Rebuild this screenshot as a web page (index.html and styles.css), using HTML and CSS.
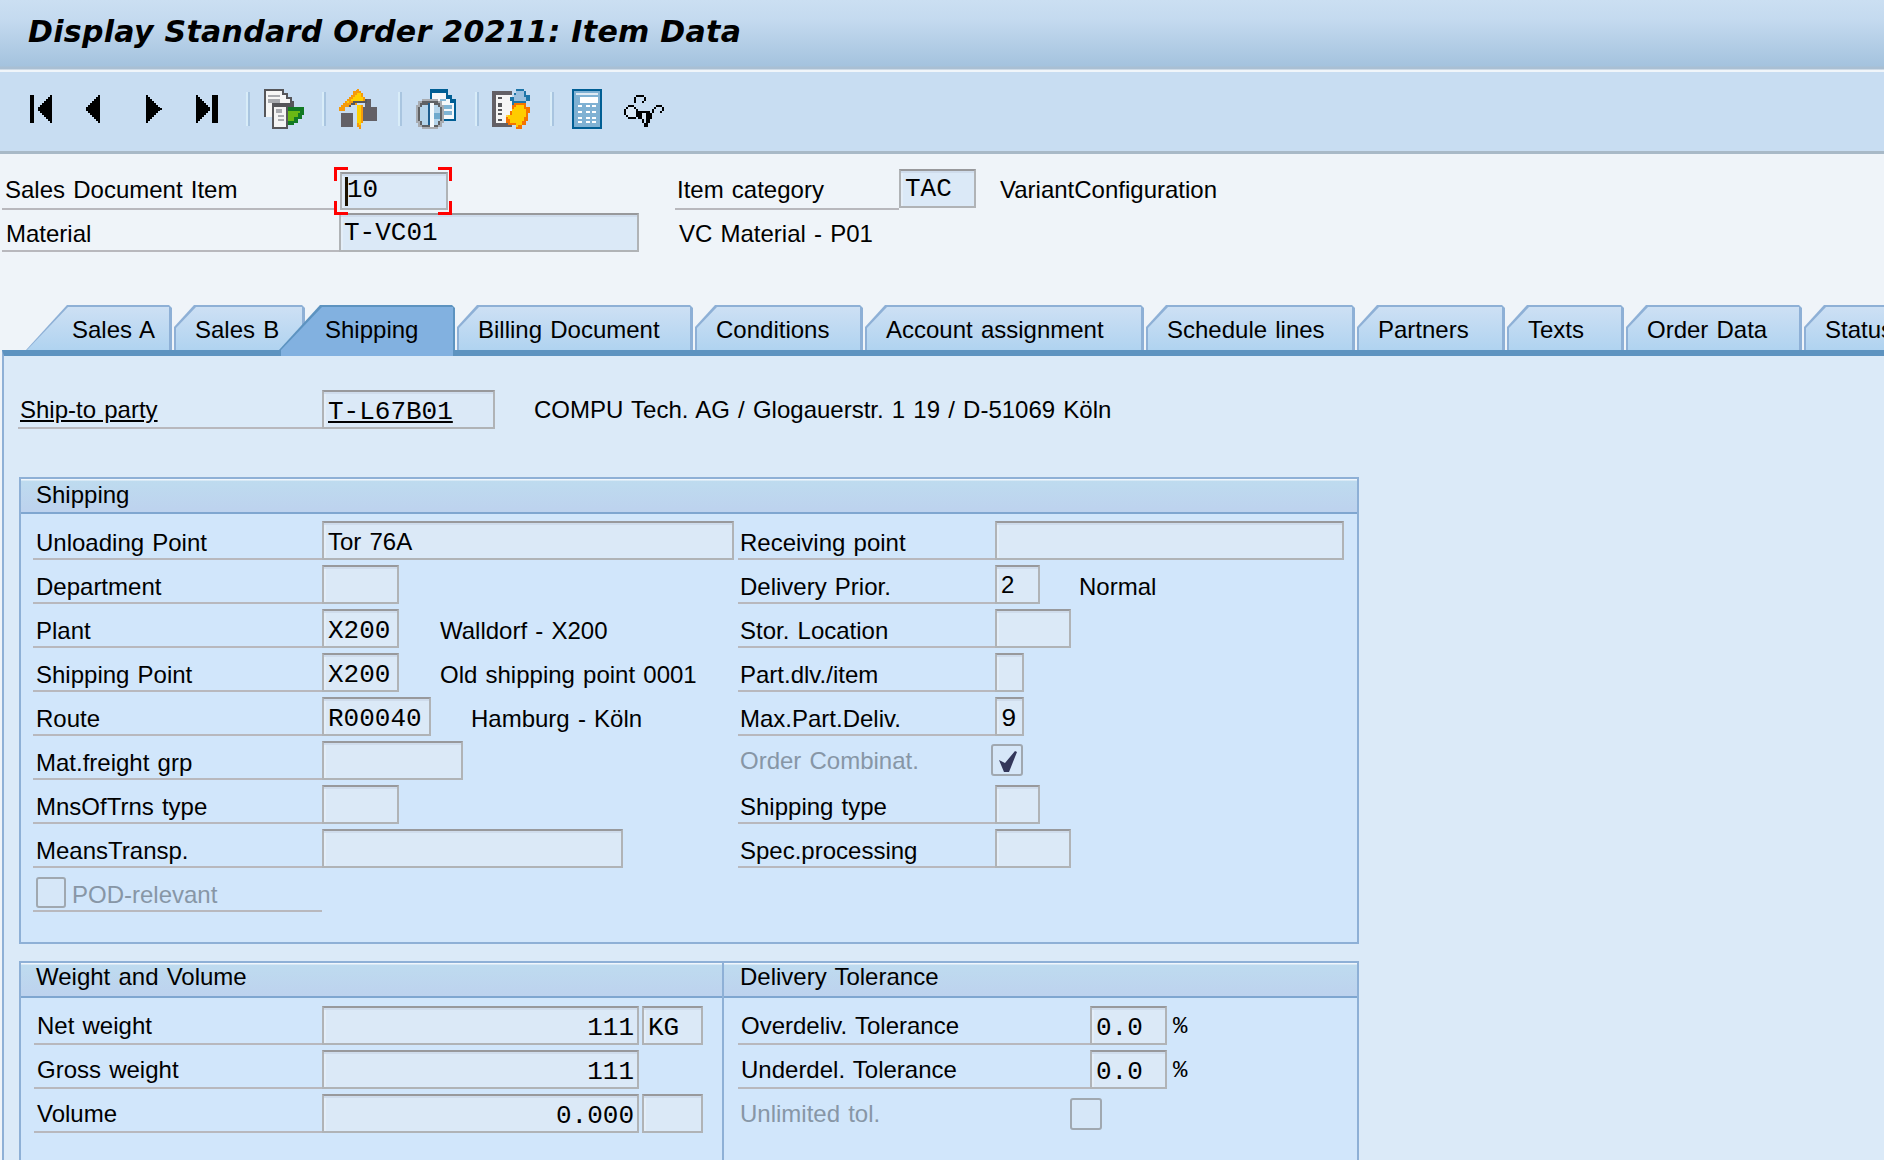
FILE: index.html
```html
<!DOCTYPE html>
<html lang="en">
<head>
<meta charset="utf-8">
<title>Display Standard Order 20211: Item Data</title>
<link rel="stylesheet" href="styles.css">
</head>
<body>
<header class="titlebar"><h1>Display Standard Order 20211: Item Data</h1></header>
<nav class="toolbar">
  <svg class="nav" width="22" height="28" viewBox="0 0 22 28"><path d="M0 0h4v28H0zM22 0v28h-2v-2h-2v-2h-2v-2h-2v-2h-2v-2h-2v-2H8v-4h2v-2h2v-2h2V6h2V4h2V2h2V0z"/></svg>
  <svg class="nav" width="14" height="28" viewBox="0 0 14 28"><path d="M14 0v28h-2v-2h-2v-2H8v-2H6v-2H4v-2H2v-2H0v-4h2v-2h2V8h2V6h2V4h2V2h2V0z"/></svg>
  <svg class="nav" width="16" height="28" viewBox="0 0 16 28"><path d="M0 0v28h2v-2h2v-2h2v-2h2v-2h2v-2h2v-2h2v-1h2v-2h-2v-1h-2v-2h-2V8H8V6H6V4H4V2H2V0z"/></svg>
  <svg class="nav" width="22" height="28" viewBox="0 0 22 28"><path d="M16 0h6v28h-6zM0 0v28h2v-2h2v-2h2v-2h2v-2h2v-2h2v-2h2v-4h-2v-2h-2V8H8V6H6V4H4V2H2V0z"/></svg>
  <span class="sep"></span>
  <svg class="ico" width="40" height="40" viewBox="0 0 20 20"><path fill="#56565a" d="M0 0h10v2h2v2h2v2h1v8H0z"/><path fill="#f6f6f6" d="M1 1h8v2h2v2h2v2H4v7H1z"/><path fill="#a9abb0" d="M2 3h6v1H2zM2 5h6v2H2z"/><path fill="#56565a" d="M4 8h8v12H4z"/><path fill="#f4f4f4" d="M5 9h6v10H5z"/><path fill="#a9abb0" d="M6 10h3v2H6zM7 13h3v1H7zM7 15h3v1H7z"/><path fill="#127a24" d="M12 9h8v4h-1v2h-2v2h-2v1h-3z"/><path fill="#6ab814" d="M12 11h6v1h-1v2h-2v2h-3z"/></svg>
  <span class="sep"></span>
  <svg class="ico" width="40" height="40" viewBox="0 0 20 20"><path fill="#636066" d="M1 12h6v7H1zM12 9h7v7h-7zM13 5h3v4h-3z"/><path fill="#f59a0c" d="M9 0h1v1h1v1h1v2h1v1h1v2H9v1H6v1H3v2H0V9h1V8h1V7h1V6h1V5h1V4h1V3h1V1h1z"/><path fill="#ffd000" d="M9 2h2v2h1v2H5v1H4V6h2V5h1V4h1V3h1z"/><path fill="#56565a" d="M5 8h1V7h1V6h6V5h1v2H8v1H6v1H5z"/><path fill="#f59a0c" d="M9 8h3v9h-1v3h-1v-1H9z"/><path fill="#ffd000" d="M9 8h2v10h-1v-1H9z"/></svg>
  <span class="sep"></span>
  <svg class="ico" width="40" height="40" viewBox="0 0 20 20"><path fill="#005e94" d="M7 0h9v3h2v2h2v11H7z"/><path fill="#f6f8fa" d="M8 2h7v3h2v2h2v8H8z"/><path fill="#7fb4d4" d="M12 5h3v1h-3zM14 8h4v2h-4zM14 11h4v2h-4z"/><path fill="#a8abb0" d="M3 5h8v1h2v2h1v9h-1v2h-2v1H3v-1H1v-2H0V8h1V6h2z"/><path fill="#5f6164" d="M3 6h8v1h1v2h1v7h-1v2h-1v1H3v-1H2v-2H1V9h1V7h1z"/><path fill="#b5d4ea" d="M3 8h8v1h1v7h-1v2H3v-2H2V9h1z"/><path fill="#f4f8fb" d="M7 7h2v12H7z"/><path fill="#1d5e8e" d="M6 7h1v11H6z"/><path fill="#6fa9cd" d="M9 12h3v3H9z"/></svg>
  <span class="sep"></span>
  <svg class="ico" width="40" height="40" viewBox="0 0 20 20"><path fill="#636066" d="M0 1h10v2H2v14h8v2H0z"/><path fill="#f6f6f6" d="M2 3h8v14H2z"/><path fill="#56565a" d="M3 4h2v1H3zM3 7h2v2H3zM3 10h2v1H3zM3 12h2v1H3zM3 15h2v1H3z"/><path fill="#ffd24a" d="M7 13h3v2H7z"/><path fill="#1d75a8" d="M12 0h4v1h1v2h2v3h-2v2h-7V6H9V4h2V2h1z"/><path fill="#9cc0de" d="M12 1h4v3h1v2h-6V3h1z"/><path fill="#f57300" d="M11 7h6v2h2v3h-1v4h-1v2h-2v2h-3v-2H8v-1H7v-3h2v-3h1V8h1z"/><path fill="#ffcc00" d="M12 8h4v2h1v4h-1v2h-1v2h-2v1h-1v-2H9v-2H8v-2h2v-3h1V9h1z"/></svg>
  <span class="sep"></span>
  <svg class="calc" width="30" height="40" viewBox="0 0 15 20"><path fill="#005e94" d="M0 0h15v20H0z"/><path fill="#7fb1d3" d="M1 1h13v18H1z"/><path fill="#dfeaf3" d="M2 2h11v1H2z"/><path fill="#fff" d="M4 4h9v3H4zM3 8h2v1H3zM7 8h2v1H7zM10 8h2v1h-2zM3 11h2v1H3zM7 11h2v1H7zM10 11h2v1h-2zM3 14h2v1H3zM7 14h2v1H7zM10 14h2v1h-2zM3 16h2v1H3zM7 16h2v1H7zM10 16h2v1h-2z"/></svg>
  <svg class="ico" width="40" height="40" viewBox="0 0 20 20"><path fill="#000" d="M6 3h4v1H6zM5 4h1v3H5zM10 4h1v2h-1zM9 6h1v1H9zM2 8h3v1H2zM1 9h1v1H1zM0 10h1v3H0zM1 13h1v1H1zM2 14h4v1H2zM5 9h1v1H5zM6 10h1v4H6zM7 11h6v1H7zM7 12h2v3H7zM9 15h1v2H9zM11 12h2v5h-2zM13 12h1v3h-1zM10 17h2v2h-2zM14 10h1v2h-1zM15 9h1v1h-1zM16 8h3v1h-3zM19 9h1v2h-1zM18 11h1v1h-1z"/><path fill="#d9e7f5" d="M2 9h3v1h1v4H2zM1 10h1v3H1zM9 12h2v3H9z"/></svg>
</nav>

<main class="page">
  <section class="head">
    <div class="row top-row">
      <label class="lbl lbl-head">Sales Document Item</label>
      <span class="focus-wrap">
        <span class="field mono f-item">10</span>
        <i class="crn tl"></i><i class="crn tr"></i><i class="crn bl"></i><i class="crn br"></i><i class="caret"></i>
      </span>
      <label class="lbl lbl-cat">Item category</label>
      <span class="field mono f-cat">TAC</span>
      <span class="txt t-cat">VariantConfiguration</span>
    </div>
    <div class="row">
      <label class="lbl lbl-mat">Material</label>
      <span class="field mono f-mat">T-VC01</span>
      <span class="txt t-mat">VC Material - P01</span>
    </div>
  </section>

  <div class="tabs">
    <div class="tab first"><span>Sales A</span></div>
    <div class="tab"><span>Sales B</span></div>
    <div class="tab active"><span>Shipping</span></div>
    <div class="tab"><span>Billing Document</span></div>
    <div class="tab"><span>Conditions</span></div>
    <div class="tab"><span>Account assignment</span></div>
    <div class="tab"><span>Schedule lines</span></div>
    <div class="tab"><span>Partners</span></div>
    <div class="tab"><span>Texts</span></div>
    <div class="tab"><span>Order Data</span></div>
    <div class="tab"><span>Status</span></div>
  </div>

  <section class="panel">
    <div class="row shipto">
      <label class="lbl lbl-ship"><u>Ship-to party</u></label>
      <span class="field mono f-ship"><u>T-L67B01</u></span>
      <span class="txt t-ship">COMPU Tech. AG / Glogauerstr. 1 19 / D-51069 Köln</span>
    </div>

    <section class="box box-ship">
      <h2 class="box-h">Shipping</h2>
      <div class="cols">
        <div class="col-l">
          <div class="row"><label class="lbl">Unloading Point</label><span class="field w412 tor">Tor 76A</span></div>
          <div class="row"><label class="lbl">Department</label><span class="field w77"></span></div>
          <div class="row"><label class="lbl">Plant</label><span class="field mono w77">X200</span><span class="txt d41">Walldorf - X200</span></div>
          <div class="row"><label class="lbl">Shipping Point</label><span class="field mono w77">X200</span><span class="txt d41">Old shipping point 0001</span></div>
          <div class="row"><label class="lbl">Route</label><span class="field mono w109">R00040</span><span class="txt d40">Hamburg - Köln</span></div>
          <div class="row"><label class="lbl">Mat.freight grp</label><span class="field w141"></span></div>
          <div class="row"><label class="lbl">MnsOfTrns type</label><span class="field w77"></span></div>
          <div class="row"><label class="lbl">MeansTransp.</label><span class="field w301"></span></div>
          <div class="row"><label class="lbl lbl-pod"><i class="chk chk-pod"></i><em class="off pod-t">POD-relevant</em></label></div>
        </div>
        <div class="col-r">
          <div class="row"><label class="lbl lbl-r">Receiving point</label><span class="field w349"></span></div>
          <div class="row"><label class="lbl lbl-r">Delivery Prior.</label><span class="field w45">2</span><span class="txt d39">Normal</span></div>
          <div class="row"><label class="lbl lbl-r">Stor. Location</label><span class="field w76"></span></div>
          <div class="row"><label class="lbl lbl-r">Part.dlv./item</label><span class="field w29"></span></div>
          <div class="row"><label class="lbl lbl-r">Max.Part.Deliv.</label><span class="field w29 mono">9</span></div>
          <div class="row"><label class="lbl lbl-r plain off">Order Combinat.</label><i class="chk chk-on"><svg width="26" height="28" viewBox="0 0 26 28"><path fill="#33375a" d="M5 14l6 3L21 5l2 1-8 20h-5z"/></svg></i></div>
          <div class="row"><label class="lbl lbl-r">Shipping type</label><span class="field w45"></span></div>
          <div class="row"><label class="lbl lbl-r">Spec.processing</label><span class="field w76"></span></div>
        </div>
      </div>
    </section>

    <div class="pair">
      <section class="box box-wt">
        <h2 class="box-h">Weight and Volume</h2>
        <div class="row"><label class="lbl">Net weight</label><span class="field mono num w317">111</span><span class="field mono unit">KG</span></div>
        <div class="row"><label class="lbl">Gross weight</label><span class="field mono num w317">111</span></div>
        <div class="row"><label class="lbl">Volume</label><span class="field mono num w317">0.000</span><span class="field mono unit"></span></div>
      </section>
      <section class="box box-tol">
        <h2 class="box-h">Delivery Tolerance</h2>
        <div class="row"><label class="lbl lbl-t">Overdeliv. Tolerance</label><span class="field mono w77">0.0</span><span class="pct mono">%</span></div>
        <div class="row"><label class="lbl lbl-t">Underdel. Tolerance</label><span class="field mono w77">0.0</span><span class="pct mono">%</span></div>
        <div class="row"><label class="lbl lbl-t plain off">Unlimited tol.</label><i class="chk chk-ul"></i></div>
      </section>
    </div>
  </section>
</main>
</body>
</html>
```
FILE: styles.css
```css
* { box-sizing: border-box; }
html, body { margin: 0; height: 100%; overflow: hidden; }
body {
  width: 1884px; height: 1160px; background: #eff4f9;
  font: 24px/1 "Liberation Sans", Arial, sans-serif; color: #000; word-spacing: 1.5px;
}
.titlebar {
  height: 72px; padding: 15px 0 0 28px;
  background: linear-gradient(#cbdff2 0, #c4daef 20px, #a4c3de 66px, #a9bfd3 67px, #a9bfd3 69px, #f0f5fa 70px);
}
.titlebar h1 { margin: 0; font: italic bold 30px/34px "DejaVu Sans", sans-serif; letter-spacing: 0.3px; word-spacing: 0; color: #000; white-space: nowrap; }
.toolbar {
  height: 82px; padding: 17px 0 0 30px; background: #c8ddf2; border-bottom: 3px solid #a8b9c7;
  display: grid; align-items: center; align-content: start;
  grid-template-columns: 56px 60px 50px 50px 18px 58px 17px 59px 18px 59px 17px 58px 22px 52px auto;
  grid-template-rows: 40px;
}
.toolbar svg { shape-rendering: crispEdges; display: block; }
.sep { width: 4px; height: 34px; background: linear-gradient(90deg, #d8ecf8 50%, #a9c5e0 50%); }

.row { display: flex; height: 44px; align-items: flex-start; }
.lbl {
  flex: none; width: 289px; height: 44px; padding: 14px 0 0 3px; line-height: 26px;
  border-bottom: 2px solid #b8b8bd; white-space: nowrap; overflow: hidden;
}
.plain { border-bottom: 0; line-height: 22px; }
.off { color: #8796a6; font-style: normal; }
.field {
  flex: none; display: block; height: 39px; margin-top: 5px; padding: 5px 0 0 4px; line-height: 26px;
  background: #dbe9f7; white-space: nowrap; overflow: hidden;
  border: 2px solid #b0b3b6; border-top-color: #98999c;
  box-shadow: inset 0 2px 0 #cfdcec, inset 2px 0 0 #e4eef8;
}
.tor { padding-top: 6px; }
.mono { font-family: "Liberation Mono", monospace; font-size: 26px; letter-spacing: 0; padding-top: 7px; }
.num { text-align: right; padding-right: 3px; }
.txt { flex: none; padding-top: 14px; line-height: 26px; white-space: nowrap; }

.head { height: 151px; padding-top: 13px; }
.lbl-head { width: 332px; height: 43px; padding: 10px 0 0 3px; margin-left: 2px; }
.top-row { height: 44px; }
.focus-wrap { position: relative; flex: none; width: 118px; height: 48px; padding: 5px 0 0 6px; }
.f-item { width: 108px; height: 38px; margin: 0; padding: 3px 0 0 5px; }
.crn { position: absolute; width: 14px; height: 14px; border: 0 solid #f00; }
.tl { left: 0; top: 0; border-width: 3px 0 0 3px; }
.tr { right: 0; top: 0; border-width: 3px 3px 0 0; }
.bl { left: 0; bottom: 0; border-width: 0 0 3px 3px; }
.br { right: 0; bottom: 0; border-width: 0 3px 3px 0; }
.caret { position: absolute; left: 11px; top: 10px; width: 3px; height: 29px; background: #1c1200; }
.lbl-cat { width: 224px; height: 43px; margin-left: 223px; padding: 10px 0 0 2px; }
.f-cat { width: 77px; margin-top: 2px; padding-top: 5px; }
.t-cat { padding-top: 10px; margin-left: 24px; }
.lbl-mat { width: 337px; margin-left: 2px; height: 41px; padding: 10px 0 0 4px; }
.f-mat { width: 300px; margin-top: 2px; padding-top: 5px; padding-left: 3px; }
.t-mat { padding-top: 10px; margin-left: 40px; }

.tabs {
  display: grid; height: 45px; padding-left: 26px; column-gap: 2px;
  grid-template-columns: 146px 131px 148px 236px 168px 279px 209px 148px 117px 176px 160px;
}
.tab {
  position: relative; height: 45px; padding: 12px 0 0 21px; line-height: 26px; white-space: nowrap;
  background: #8eb0d6;
  clip-path: polygon(0 100%, 0 22px, 20px 0, calc(100% - 3px) 0, 100% 3px, 100% 100%);
}
.tab::before {
  content: ""; position: absolute; inset: 2px 3px 0 2px; background: linear-gradient(#cde0f4, #b0d3f0);
  clip-path: polygon(0 100%, 0 21px, 20px 0, 100% 0, 100% 100%);
}
.tab span { position: relative; }
.first { padding-left: 46px; clip-path: polygon(0 100%, 41px 0, calc(100% - 3px) 0, 100% 3px, 100% 100%); }
.first::before { inset: 2px 3px 0 1px; clip-path: polygon(0 100%, 41px 0, 100% 0, 100% 100%); }
.active {
  z-index: 2; margin-left: -28px; height: 51px; padding-left: 46px; background: #5d93c0;
  clip-path: polygon(0 45px, 41px 0, calc(100% - 3px) 0, 100% 3px, 100% 100%, 0 100%);
}
.active::before { inset: 2px 2px 0 2px; background: #82b1e0; clip-path: polygon(0 43px, 41px 0, 100% 0, 100% 100%, 0 100%); }

.panel {
  height: 812px; margin-left: 2px; background: #dbeaf8; overflow: hidden;
  border-top: 6px solid #5d93c0; border-left: 2px solid #8eb0d6;
}
.shipto { height: 72px; padding-top: 28px; }
.lbl-ship { width: 304px; height: 45px; margin-left: 14px; padding: 13px 0 0 2px; }
.f-ship { width: 173px; margin-top: 6px; }
.t-ship { margin-left: 39px; padding-top: 13px; }

.box { background: #d1e6fb; border: 2px solid #8eb0d6; }
.box-h {
  margin: 0; height: 35px; padding: 3px 0 0 15px; font: 24px/26px "Liberation Sans", sans-serif; word-spacing: 1.5px;
  background: linear-gradient(#f0f6fc 0, #f0f6fc 1px, #bedbef 2px, #bdd2ee 100%);
  border-bottom: 2px solid #7fa6d0;
}
.box-ship { height: 467px; margin: 49px 0 17px 15px; width: 1340px; }
.cols { display: flex; padding: 2px 0 0 12px; }
.col-l { width: 705px; }
.lbl-pod { display: flex; align-items: flex-start; padding: 9px 0 0 3px; }
.chk {
  display: block; flex: none; background: #d6e7f8; border: 2px solid #a0a8b0; border-radius: 3px;
}
.chk-pod { width: 30px; height: 31px; margin-right: 6px; }
.off { line-height: 22px; }
.pod-t { padding-top: 5px; line-height: 26px; }
.lbl-r { width: 257px; padding-left: 2px; }
.w412 { width: 412px; } .w77 { width: 77px; } .w109 { width: 109px; } .w141 { width: 141px; }
.w301 { width: 301px; } .w349 { width: 349px; } .w45 { width: 45px; } .w76 { width: 76px; }
.w29 { width: 29px; } .w317 { width: 317px; }
.d41 { margin-left: 41px; } .d40 { margin-left: 40px; } .d39 { margin-left: 39px; }
.chk-on { width: 32px; height: 32px; margin: 8px 0 0 -4px; padding: 0 0 0 1px; }
.chk-on svg { display: block; }

.pair { display: flex; margin-left: 15px; width: 1340px; }
.pair .box-h { padding-top: 1px; }
.box-wt { width: 705px; height: 300px; padding: 0; }
.box-wt .row, .box-tol .row { position: relative; top: 3px; }
.box-wt .lbl { margin-left: 13px; width: 288px; padding: 12px 0 0 3px; }
.unit { width: 61px; margin-left: 3px; }
.box-tol { flex: 1; height: 300px; border-left: 0; }
.lbl-t { width: 352px; margin-left: 14px; padding-top: 12px; }
.lbl-t.plain { padding-top: 14px; padding-left: 2px; }
.box-tol .box-h { padding-left: 16px; }
.pct { flex: none; padding: 13px 0 0 6px; line-height: 26px; font-size: 24px; }
.chk-ul { width: 32px; height: 32px; margin: 9px 0 0 -20px; }
```
